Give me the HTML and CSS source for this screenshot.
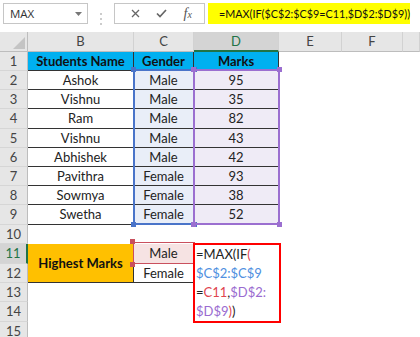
FILE: index.html
```html
<!DOCTYPE html>
<html lang="en">
<head>
    <meta charset="UTF-8">
    <title>MAX IF</title>
    <link rel="stylesheet" href="styles.css">
</head>
<body>
    <div class="bar">
        <div class="namebox">
            <span>MAX</span>
            <svg width="7" height="4" viewBox="0 0 7 4"><path d="M0 0H7L3.5 4Z" fill="#777"/></svg>
        </div>
        <div class="grip">
            <svg width="2" height="12" viewBox="0 0 2 12"><circle cx="1" cy="1" r="1" fill="#bbb"/><circle cx="1" cy="6" r="1" fill="#bbb"/><circle cx="1" cy="11" r="1" fill="#bbb"/></svg>
        </div>
        <div class="fxbox">
            <svg width="9" height="9" viewBox="0 0 9 9"><path d="M1 1L8 8M8 1L1 8" stroke="#666" stroke-width="1.3"/></svg>
            <svg width="11" height="9" viewBox="0 0 11 9"><path d="M1 4.5L4 7.5L10 1" stroke="#666" stroke-width="1.7" fill="none"/></svg>
            <span class="fx">f<sub>x</sub></span>
        </div>
        <div class="formula">=MAX(IF($C$2:$C$9=C11,$D$2:$D$9))</div>
    </div>

    <div class="sheet">
        <table class="grid">
            <colgroup>
                <col style="width:28px"><col style="width:106px"><col style="width:60px"><col style="width:85px"><col style="width:63px"><col style="width:61px"><col>
            </colgroup>
            <tr class="r19">
                <th class="corner"><svg width="28" height="19" viewBox="0 0 28 19"><path d="M13 17H25V5Z" fill="#c4c4c4"/></svg></th>
                <th class="col">B</th><th class="col">C</th><th class="col sel">D</th><th class="col">E</th><th class="col">F</th><th class="col"></th>
            </tr>
            <tr class="r19">
                <th class="row">1</th>
                <td class="d hd">Students Name</td><td class="d hd">Gender</td><td class="d hd">Marks</td><td></td><td></td><td></td>
            </tr>
            <tr class="r19">
                <th class="row">2</th>
                <td class="d">Ashok</td><td class="d cb">Male</td><td class="d cp">95</td><td></td><td></td><td></td>
            </tr>
            <tr class="r19">
                <th class="row">3</th>
                <td class="d">Vishnu</td><td class="d cb">Male</td><td class="d cp">35</td><td></td><td></td><td></td>
            </tr>
            <tr class="r20">
                <th class="row">4</th>
                <td class="d">Ram</td><td class="d cb">Male</td><td class="d cp">82</td><td></td><td></td><td></td>
            </tr>
            <tr class="r19">
                <th class="row">5</th>
                <td class="d">Vishnu</td><td class="d cb">Male</td><td class="d cp">43</td><td></td><td></td><td></td>
            </tr>
            <tr class="r19">
                <th class="row">6</th>
                <td class="d">Abhishek</td><td class="d cb">Male</td><td class="d cp">42</td><td></td><td></td><td></td>
            </tr>
            <tr class="r19">
                <th class="row">7</th>
                <td class="d">Pavithra</td><td class="d cb">Female</td><td class="d cp">93</td><td></td><td></td><td></td>
            </tr>
            <tr class="r19">
                <th class="row">8</th>
                <td class="d">Sowmya</td><td class="d cb">Female</td><td class="d cp">38</td><td></td><td></td><td></td>
            </tr>
            <tr class="r20">
                <th class="row">9</th>
                <td class="d">Swetha</td><td class="d cb">Female</td><td class="d cp">52</td><td></td><td></td><td></td>
            </tr>
            <tr class="r19">
                <th class="row">10</th>
                <td></td><td></td><td></td><td></td><td></td><td></td>
            </tr>
            <tr class="r20">
                <th class="row active">11</th>
                <td class="d gold" rowspan="2">Highest Marks</td>
                <td class="d cr">Male</td>
                <td class="fcell" rowspan="4">
                    <div class="box">
                        <div>=MAX(IF<span class="red">(</span></div>
                        <div class="blue">$C$2:$C$9</div>
                        <div>=<span class="red">C11</span>,<span class="purple">$D$2:</span></div>
                        <div><span class="purple">$D$9</span><span class="red">)</span>)</div>
                    </div>
                </td>
                <td></td><td></td><td></td>
            </tr>
            <tr class="r19">
                <th class="row">12</th>
                <td class="d">Female</td><td></td><td></td><td></td>
            </tr>
            <tr class="r19">
                <th class="row">13</th>
                <td></td><td></td><td></td><td></td><td></td>
            </tr>
            <tr class="r20">
                <th class="row">14</th>
                <td></td><td></td><td></td><td></td><td></td>
            </tr>
            <tr class="r16">
                <th class="row last">15</th>
                <td></td><td></td><td></td><td></td><td></td><td></td>
            </tr>
        </table>

        <!-- reference highlights drawn over the cells -->
        <div class="range range-blue"><i class="tl"></i><i class="tr"></i><i class="bl"></i><i class="br"></i></div>
        <div class="range range-purple"><i class="tl"></i><i class="tr"></i><i class="bl"></i><i class="br"></i></div>
        <div class="range range-red"><i class="tl"></i><i class="bl"></i></div>
    </div>
</body>
</html>
```

FILE: styles.css
```css
* {
    box-sizing: border-box;
}

body {
    margin: 0;
    width: 420px;
    height: 337px;
    overflow: hidden;
    background: #fff;
    font-family: Lato, 'Liberation Sans', sans-serif;
    color: #111;
}

/* formula bar */
.bar {
    height: 32px;
    display: flex;
    align-items: flex-start;
    padding-top: 3px;
}

.namebox {
    margin-left: 3px;
    width: 85px;
    height: 21px;
    border: 1px solid #c6c6c6;
    display: flex;
    align-items: center;
    justify-content: space-between;
    padding: 0 5px 0 6px;
    font-family: 'Open Sans', sans-serif;
    font-size: 11.5px;
    color: #333;
}

.grip {
    margin-left: 12px;
    padding-top: 6px;
    width: 14px;
}

.fxbox {
    width: 91px;
    height: 21px;
    border: 1px solid #c6c6c6;
    display: flex;
    align-items: center;
    justify-content: space-around;
    padding: 0 4px 0 8px;
}

.fx {
    font-family: 'Liberation Serif', serif;
    font-style: italic;
    font-size: 14px;
    color: #555;
    line-height: 1;
}

.fx sub {
    font-size: 10px;
    vertical-align: 0;
}

.formula {
    margin-left: 3px;
    width: 202px;
    height: 21px;
    background: #ffff00;
    padding-left: 11px;
    font-size: 10.8px;
    line-height: 21px;
    white-space: nowrap;
}

/* sheet */
.sheet {
    position: relative;
}

.grid {
    border-collapse: separate;
    border-spacing: 0;
    table-layout: fixed;
    width: 420px;
}

.r19 { height: 19px; }
.r20 { height: 20px; }
.r16 { height: 16px; }

th, td {
    padding: 0;
    font-size: 13px;
    line-height: 1;
    text-align: center;
    vertical-align: middle;
    white-space: nowrap;
    overflow: hidden;
}

th {
    font-weight: normal;
    color: #444;
    background: #e6e6e6;
}

.corner {
    border-right: 1px solid #bdbdbd;
    border-bottom: 1px solid #bdbdbd;
    line-height: 0;
}

.col {
    border-right: 1px solid #d2d2d2;
    border-bottom: 1px solid #bdbdbd;
}

.col.sel {
    background: #d4d4d4;
    color: #217346;
    border-bottom: 2px solid #217346;
}

.row {
    border-right: 1px solid #bdbdbd;
    border-bottom: 1px solid #d6d6d6;
}

.row.last {
    vertical-align: top;
    padding-top: 3px;
    border-bottom: 0;
}

.row.active {
    background: #d4d4d4;
    color: #217346;
    border-right: 2px solid #217346;
}

.d {
    border-right: 1px solid #333;
    border-bottom: 1px solid #333;
    color: #222;
}

.hd {
    background: #00b0f0;
    font-weight: bold;
    color: #111;
}

.cb { background: #e9eef8; }
.cp { background: #efebf6; }
.cr { background: #f6e3e3; }

.gold {
    background: #ffc000;
    font-weight: bold;
    color: #111;
}

.fcell {
    overflow: visible;
    vertical-align: top;
    text-align: left;
}

.box {
    margin: -1px -2px -1px -1px;
    height: 80px;
    border: 2px solid #ff0000;
    padding-left: 1px;
    line-height: 19px;
    font-size: 13px;
    color: #222;
    position: relative;
    z-index: 2;
    background: #fff;
}

.red { color: #e0454f; }
.blue { color: #4f8fe0; }
.purple { color: #9a6bd0; }

/* range highlights */
.range {
    position: absolute;
    border: 2px solid var(--c);
    pointer-events: none;
}

.range i {
    position: absolute;
    width: 5px;
    height: 5px;
    background: var(--c);
}

.range .tl { top: -4px; left: -4px; }
.range .tr { top: -4px; right: -4px; }
.range .bl { bottom: -4px; left: -4px; }
.range .br { bottom: -4px; right: -4px; }

.range-blue {
    --c: #4a74c9;
    left: 133px;
    top: 37px;
    width: 62px;
    height: 156px;
}

.range-purple {
    --c: #9b6fd0;
    left: 193px;
    top: 37px;
    width: 87px;
    height: 156px;
}

.range-red {
    --c: #c9505e;
    border-width: 1.5px;
    left: 133px;
    top: 210px;
    width: 62px;
    height: 22px;
}
```
